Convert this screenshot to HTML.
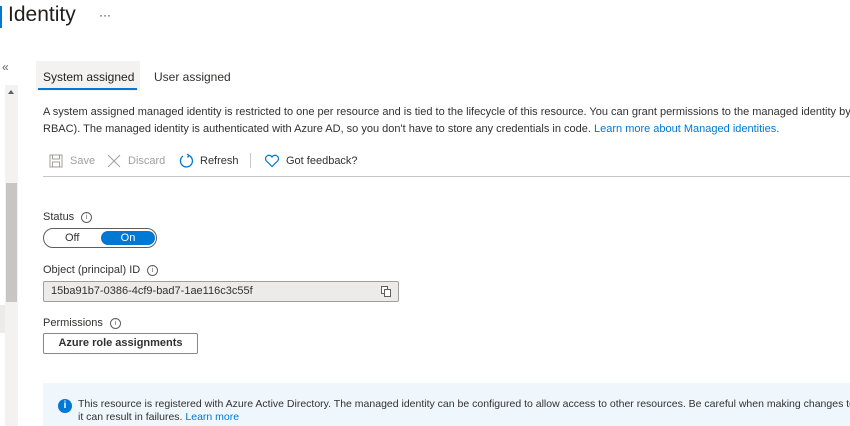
<!DOCTYPE html>
<html style="overflow:hidden;width:850px;height:426px"><head><style>
body{margin:0;width:850px;height:426px;overflow:hidden;background:#fff;font-family:"Liberation Sans",sans-serif;color:#323130;position:relative;font-size:11px}
#w{position:absolute;left:0;top:0;width:850px;height:426px;overflow:hidden}
.a{position:absolute;white-space:nowrap}
.info{display:inline-block;width:9px;height:9px;border:1px solid #605e5c;border-radius:50%;font-size:7px;text-align:center;line-height:9px;color:#605e5c;margin-left:7px;vertical-align:1px}
a{color:#0078d4;text-decoration:none}
</style></head><body><div id="w">
<div class="a" style="left:0;top:6px;width:2px;height:22px;background:#0078d4"></div>
<div class="a" style="left:8px;top:3px;font-size:21px;color:#201f1e">Identity</div>
<div class="a" style="left:99px;top:8px;font-size:12px;color:#323130">···</div>
<div class="a" style="left:2px;top:60px;font-size:12px;color:#605e5c">«</div>
<div class="a" style="left:5px;top:85px;width:13px;height:341px;background:#f3f2f1"></div>
<div class="a" style="left:6px;top:183px;width:11px;height:119px;background:#c8c6c4"></div>
<div class="a" style="left:8px;top:90px;width:0;height:0;border-left:3px solid transparent;border-right:3px solid transparent;border-bottom:4px solid #605e5c"></div>
<div class="a" style="left:0;top:305px;width:5px;height:28px;background:#edebe9"></div>
<div class="a" style="left:36px;top:61px;width:104px;height:30px;background:#f3f2f1"></div>
<div class="a" style="left:43px;top:70px;font-size:12px;color:#201f1e">System assigned</div>
<div class="a" style="left:38px;top:88px;width:99px;height:2px;background:#0078d4"></div>
<div class="a" style="left:154px;top:70px;font-size:12px;color:#323130">User assigned</div>
<div class="a" style="left:43px;top:104px;line-height:17px;font-size:11px">A system assigned managed identity is restricted to one per resource and is tied to the lifecycle of this resource. You can grant permissions to the managed identity by using Azure role-based access control (Azure<br>RBAC). The managed identity is authenticated with Azure AD, so you don't have to store any credentials in code. <a>Learn more about Managed identities.</a></div>
<svg class="a" style="left:49px;top:154px" width="14" height="14" viewBox="0 0 14 14" fill="none" stroke="#a19f9d"><rect x="1" y="1" width="12" height="12"/><rect x="3.5" y="1" width="7" height="4"/><rect x="3.5" y="8" width="7" height="5"/></svg>
<div class="a" style="left:70px;top:155px;color:#a19f9d">Save</div>
<svg class="a" style="left:107px;top:154px" width="14" height="14" stroke="#a19f9d"><path d="M1 1L13 13M13 1L1 13"/></svg>
<div class="a" style="left:128px;top:155px;color:#a19f9d">Discard</div>
<svg class="a" style="left:179px;top:153px" width="15" height="15" fill="none" stroke="#0078d4" stroke-width="1.3"><path d="M4 3A6 6 0 1 0 10 2.5"/><path d="M10 2.5L8 1M10 2.5L8.5 4.5"/></svg>
<div class="a" style="left:200px;top:155px">Refresh</div>
<div class="a" style="left:250px;top:153px;width:1px;height:15px;background:#c8c6c4"></div>
<svg class="a" style="left:264px;top:154px" width="16" height="14" fill="none" stroke="#0078d4" stroke-width="1.2"><path d="M8 12.5L2 6.5A3 3 0 0 1 8 3A3 3 0 0 1 14 6.5Z"/></svg>
<div class="a" style="left:286px;top:155px">Got feedback?</div>
<div class="a" style="left:43px;top:176px;width:807px;height:1px;background:#c8c6c4"></div>
<div class="a" style="left:43px;top:211px">Status<span class="info">i</span></div>
<div class="a" style="left:43px;top:228px;width:112px;height:18px;border:1px solid #605e5c;border-radius:10px"></div>
<div class="a" style="left:65px;top:232px">Off</div>
<div class="a" style="left:101px;top:231px;width:54px;height:14px;background:#0078d4;border-radius:8px;color:#fff;text-align:center;line-height:14px">On</div>
<div class="a" style="left:43px;top:264px">Object (principal) ID<span class="info">i</span></div>
<div class="a" style="left:43px;top:281px;width:354px;height:19px;background:#edebe9;border:1px solid #a19f9d;border-radius:2px"></div>
<div class="a" style="left:51px;top:285px;color:#323130">15ba91b7-0386-4cf9-bad7-1ae116c3c55f</div>
<svg class="a" style="left:381px;top:286px" width="10" height="11" fill="#fff" stroke="#605e5c"><rect x="0.5" y="0.5" width="6" height="7"/><rect x="3.5" y="3.5" width="6" height="7"/></svg>
<div class="a" style="left:43px;top:317px">Permissions<span class="info">i</span></div>
<div class="a" style="left:43px;top:333px;width:153px;height:19px;border:1px solid #8a8886;border-radius:2px;text-align:center;line-height:19px;font-weight:bold;color:#323130">Azure role assignments</div>
<div class="a" style="left:43px;top:383px;width:807px;height:43px;background:#eff6fc"></div>
<div class="a" style="left:58px;top:399px;width:14px;height:14px;border-radius:50%;background:#0078d4;color:#fff;font-weight:bold;font-size:10px;text-align:center;line-height:14px">i</div>
<div class="a" style="left:78px;top:398px;line-height:13px;font-size:10.5px">This resource is registered with Azure Active Directory. The managed identity can be configured to allow access to other resources. Be careful when making changes to the access settings for the resource because<br>it can result in failures. <a>Learn more</a></div>
</div></body></html>
